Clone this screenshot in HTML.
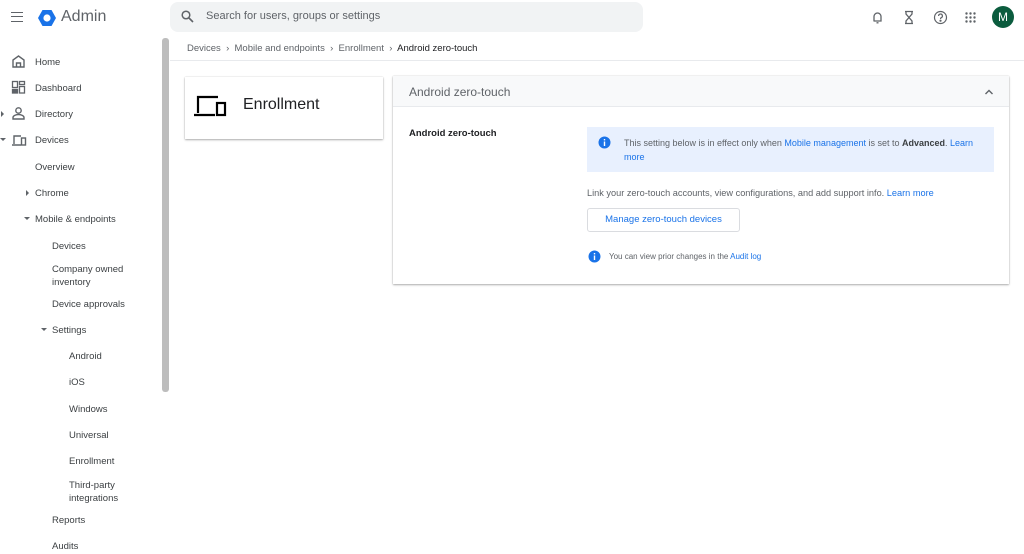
<!DOCTYPE html>
<html><head><meta charset="utf-8"><style>
*{margin:0;padding:0;box-sizing:border-box}
body{width:1024px;height:554px;overflow:hidden;background:#fff;font-family:"Liberation Sans",Arial,sans-serif;color:#202124;position:relative}
.a{position:absolute;white-space:nowrap}
.nav{font-size:9.5px;color:#3c4043}
.blue{color:#1a73e8}
</style></head><body>
<div class="a" style="left:11px;top:12px;width:12px;height:10px;border-top:1.5px solid #5f6368;border-bottom:1.5px solid #5f6368"><div style="margin-top:2.8px;border-top:1.5px solid #5f6368"></div></div>
<svg class="a" style="left:37px;top:8px" width="20" height="20" viewBox="0 0 20 20"><polygon points="1,10 5.5,2 14.5,2 19,10 14.5,18 5.5,18" fill="#1a73e8"/><circle cx="10" cy="10" r="3.6" fill="#fff"/></svg>
<div class="a" style="left:61px;top:8px;font-size:16px;color:#5f6368">Admin</div>
<div class="a" style="left:170px;top:2px;width:473px;height:30px;background:#f1f3f4;border-radius:8px"></div>
<svg class="a" style="left:181px;top:10px" width="13" height="13" viewBox="0 0 13 13"><circle cx="5" cy="5" r="3.8" fill="none" stroke="#5f6368" stroke-width="1.5"/><line x1="8" y1="8" x2="12" y2="12" stroke="#5f6368" stroke-width="1.6"/></svg>
<div class="a" style="left:206px;top:10px;font-size:11px;color:#5f6368">Search for users, groups or settings</div>
<svg class="a" style="left:870px;top:10px" width="15" height="15" viewBox="0 0 15 15" fill="none" stroke="#5f6368" stroke-width="1.3"><path d="M4 11V6.5a3.5 3.5 0 0 1 7 0V11H3.5h8"/><path d="M6.5 12.8h2"/></svg>
<svg class="a" style="left:902px;top:10px" width="14" height="15" viewBox="0 0 14 15" fill="none" stroke="#5f6368" stroke-width="1.3"><path d="M3 1.5h8M3 13.5h8M4 1.5v2.5l3 3.5-3 3.5v2.5M10 1.5v2.5l-3 3.5 3 3.5v2.5"/></svg>
<svg class="a" style="left:933px;top:10px" width="15" height="15" viewBox="0 0 15 15" fill="none" stroke="#5f6368" stroke-width="1.2"><circle cx="7.5" cy="7.5" r="6"/><path d="M5.6 6a1.9 1.9 0 1 1 2.6 1.7c-.5.3-.7.6-.7 1.3"/><circle cx="7.5" cy="10.7" r=".5" fill="#5f6368"/></svg>
<svg class="a" style="left:965px;top:12px" width="11" height="11" viewBox="0 0 11 11" fill="#5f6368"><circle cx="1.5" cy="1.5" r="1.2"/><circle cx="5.5" cy="1.5" r="1.2"/><circle cx="9.5" cy="1.5" r="1.2"/><circle cx="1.5" cy="5.5" r="1.2"/><circle cx="5.5" cy="5.5" r="1.2"/><circle cx="9.5" cy="5.5" r="1.2"/><circle cx="1.5" cy="9.5" r="1.2"/><circle cx="5.5" cy="9.5" r="1.2"/><circle cx="9.5" cy="9.5" r="1.2"/></svg>
<div class="a" style="left:992px;top:6px;width:22px;height:22px;border-radius:50%;background:#0b5c3e;color:#fff;font-size:12px;text-align:center;line-height:22px">M</div>

<svg class="a" style="left:11px;top:54px" width="15" height="15" viewBox="0 0 15 15" fill="none" stroke="#5f6368" stroke-width="1.4"><path d="M2 13V6l5.5-4L13 6v7z"/><path d="M5.5 13V9h4v4"/></svg>
<div class="a nav" style="left:35px;top:57px">Home</div>
<svg class="a" style="left:11px;top:80px" width="15" height="15" viewBox="0 0 15 15" fill="none" stroke="#5f6368" stroke-width="1.3"><rect x="1.5" y="1.5" width="5" height="6"/><rect x="8.5" y="1.5" width="5" height="3"/><rect x="1.5" y="9.5" width="5" height="3.5" fill="#5f6368"/><rect x="8.5" y="6.5" width="5" height="6.5"/></svg>
<div class="a nav" style="left:35px;top:83px">Dashboard</div>
<div class="a" style="left:1px;top:111px;border-left:3px solid #5f6368;border-top:3px solid transparent;border-bottom:3px solid transparent"></div>
<svg class="a" style="left:11px;top:106px" width="15" height="15" viewBox="0 0 15 15" fill="none" stroke="#5f6368" stroke-width="1.4"><circle cx="7.5" cy="4.5" r="2.7"/><path d="M2 13v-1.5c0-2 3.5-3 5.5-3s5.5 1 5.5 3V13z"/></svg>
<div class="a nav" style="left:35px;top:109px">Directory</div>
<div class="a" style="left:0px;top:138px;border-top:3px solid #5f6368;border-left:3px solid transparent;border-right:3px solid transparent"></div>
<svg class="a" style="left:11px;top:133px" width="16" height="14" viewBox="0 0 16 14" fill="none" stroke="#5f6368" stroke-width="1.4"><path d="M3 11V3h7M1 12h9"/><rect x="10.5" y="5" width="4" height="7"/></svg>
<div class="a nav" style="left:35px;top:135px">Devices</div>
<div class="a nav" style="left:35px;top:162px">Overview</div>
<div class="a" style="left:26px;top:190px;border-left:3px solid #5f6368;border-top:3px solid transparent;border-bottom:3px solid transparent"></div>
<div class="a nav" style="left:35px;top:188px">Chrome</div>
<div class="a" style="left:24px;top:217px;border-top:3px solid #5f6368;border-left:3px solid transparent;border-right:3px solid transparent"></div>
<div class="a nav" style="left:35px;top:214px">Mobile &amp; endpoints</div>
<div class="a nav" style="left:52px;top:241px">Devices</div>
<div class="a nav" style="left:52px;top:263px;line-height:13px">Company owned<br>inventory</div>
<div class="a nav" style="left:52px;top:299px">Device approvals</div>
<div class="a" style="left:41px;top:328px;border-top:3px solid #5f6368;border-left:3px solid transparent;border-right:3px solid transparent"></div>
<div class="a nav" style="left:52px;top:325px">Settings</div>
<div class="a nav" style="left:69px;top:351px">Android</div>
<div class="a nav" style="left:69px;top:377px">iOS</div>
<div class="a nav" style="left:69px;top:404px">Windows</div>
<div class="a nav" style="left:69px;top:430px">Universal</div>
<div class="a nav" style="left:69px;top:456px">Enrollment</div>
<div class="a nav" style="left:69px;top:479px;line-height:13px">Third-party<br>integrations</div>
<div class="a nav" style="left:52px;top:515px">Reports</div>
<div class="a nav" style="left:52px;top:541px">Audits</div>
<div class="a" style="left:162px;top:38px;width:7px;height:354px;background:#bdbdbd;border-radius:3px"></div>

<div class="a" style="left:187px;top:43px;font-size:9.5px;color:#5f6368">Devices &nbsp;›&nbsp; Mobile and endpoints &nbsp;›&nbsp; Enrollment &nbsp;›&nbsp; <span style="color:#202124">Android zero-touch</span></div>
<div class="a" style="left:170px;top:60px;width:854px;height:1px;background:#e8eaed"></div>

<div class="a" style="left:185px;top:77px;width:198px;height:62px;background:#fff;box-shadow:0 1px 2px rgba(0,0,0,.3),0 0 1px rgba(0,0,0,.2)"></div>
<svg class="a" style="left:194px;top:95px" width="36" height="22" viewBox="0 0 36 22" fill="none" stroke="#000" stroke-width="2.2"><path d="M4 18V2h20M0 20h21"/><rect x="23" y="8" width="8" height="12"/></svg>
<div class="a" style="left:243px;top:96px;font-size:16px;color:#202124">Enrollment</div>

<div class="a" style="left:393px;top:76px;width:616px;height:208px;background:#fff;box-shadow:0 1px 2px rgba(0,0,0,.3),0 0 1px rgba(0,0,0,.2)"></div>
<div class="a" style="left:393px;top:76px;width:616px;height:31px;background:#f8f9fa;border-bottom:1px solid #e8eaed"></div>
<div class="a" style="left:409px;top:85px;font-size:12px;color:#5f6368">Android zero-touch</div>
<svg class="a" style="left:984px;top:88px" width="10" height="8" viewBox="0 0 10 8" fill="none" stroke="#5f6368" stroke-width="1.4"><path d="M1.5 6L5 2.5 8.5 6"/></svg>
<div class="a" style="left:409px;top:128px;font-size:9.5px;font-weight:bold">Android zero-touch</div>
<div class="a" style="left:587px;top:127px;width:407px;height:45px;background:#e8f0fe"></div>
<svg class="a" style="left:598px;top:136px" width="13" height="13" viewBox="0 0 13 13"><circle cx="6.5" cy="6.5" r="6" fill="#1a73e8"/><rect x="5.8" y="5.5" width="1.4" height="4.5" fill="#fff"/><rect x="5.8" y="3" width="1.4" height="1.4" fill="#fff"/></svg>
<div class="a" style="left:624px;top:137px;font-size:9px;color:#5f6368;line-height:13.5px">This setting below is in effect only when <span class="blue">Mobile management</span> is set to <b style="color:#3c4043">Advanced</b>. <span class="blue">Learn</span><br><span class="blue">more</span></div>
<div class="a" style="left:587px;top:188px;font-size:9.2px;color:#5f6368">Link your zero-touch accounts, view configurations, and add support info. <span class="blue">Learn more</span></div>
<div class="a" style="left:587px;top:208px;width:153px;height:24px;border:1px solid #dadce0;border-radius:3px;font-size:9.5px;color:#1a73e8;text-align:center;line-height:22px">Manage zero-touch devices</div>
<svg class="a" style="left:588px;top:250px" width="13" height="13" viewBox="0 0 13 13"><circle cx="6.5" cy="6.5" r="6" fill="#1a73e8"/><rect x="5.8" y="5.5" width="1.4" height="4.5" fill="#fff"/><rect x="5.8" y="3" width="1.4" height="1.4" fill="#fff"/></svg>
<div class="a" style="left:609px;top:252px;font-size:8px;color:#5f6368">You can view prior changes in the <span class="blue">Audit log</span></div>
</body></html>
